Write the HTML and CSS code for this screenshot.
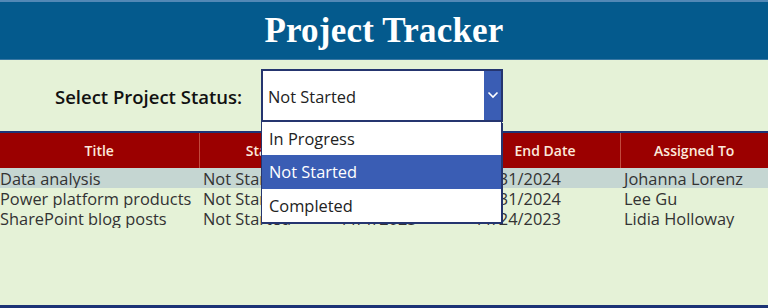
FILE: index.html
```html
<!doctype html>
<html lang="en">
<head>
	<meta charset="utf-8">
	<title>Project Tracker</title>
	<link rel="stylesheet" href="styles.css">
</head>
<body>
<div class="screen">
	<header class="top">
		<h1>Project Tracker</h1>
	</header>

	<div class="filter">
		<label class="filter-label">Select Project Status:</label>
		<div class="select">
			<div class="select-box">
				<span class="select-value">Not Started</span>
				<span class="select-btn">
					<svg width="12" height="8" viewBox="0 0 12 8"><path d="M1.5 1.5 L6 6 L10.5 1.5" fill="none" stroke="#fff" stroke-width="1.6"/></svg>
				</span>
			</div>
			<ul class="select-list">
				<li>In Progress</li>
				<li class="sel">Not Started</li>
				<li>Completed</li>
			</ul>
		</div>
	</div>

	<table class="grid">
		<thead>
			<tr>
				<th class="c-title">Title</th>
				<th class="c-status">Status</th>
				<th class="c-start">Start Date</th>
				<th class="c-end">End Date</th>
				<th class="c-who">Assigned To</th>
			</tr>
		</thead>
		<tbody>
			<tr class="hl">
				<td class="c-title">Data analysis</td>
				<td>Not Started</td>
				<td>1/1/2024</td>
				<td>12/31/2024</td>
				<td>Johanna Lorenz</td>
			</tr>
			<tr>
				<td class="c-title">Power platform products</td>
				<td>Not Started</td>
				<td>1/1/2024</td>
				<td>12/31/2024</td>
				<td>Lee Gu</td>
			</tr>
			<tr>
				<td class="c-title">SharePoint blog posts</td>
				<td>Not Started</td>
				<td>11/1/2023</td>
				<td>11/24/2023</td>
				<td>Lidia Holloway</td>
			</tr>
		</tbody>
	</table>

	<div class="rest"></div>
</div>
</body>
</html>
```

FILE: styles.css
```css
html,body{
	margin:0;
	padding:0;
	background:#e5f2d7;
	font-family:"Open Sans","Noto Sans",sans-serif;
}
*{
	box-sizing:border-box;
}
.screen{
	width:768px;
	height:308px;
	display:flex;
	flex-direction:column;
	border-bottom:3px solid #1c3476;
	overflow:hidden;
}
	.top{
		height:60px;
		background:#045a8d;
		border-top:2px solid #5288b6;
		border-bottom:1px solid #3a78a3;
		display:flex;
		align-items:center;
		justify-content:center;
	}
	.top h1{
		margin:0;
		color:#fff;
		font-family:"Liberation Serif","DejaVu Serif",serif;
		font-weight:700;
		font-size:35px;
		letter-spacing:0.2px;
	}
	.filter{
		height:71px;
		display:flex;
		align-items:center;
		padding-left:55px;
		gap:16px;
		position:relative;
		z-index:2;
	}
	.filter-label{
		width:190px;
		font-weight:600;
		font-size:18.5px;
		color:#111;
		padding-top:2px;
		white-space:nowrap;
	}
	/* the combo box and its open list */
	.select{
		position:relative;
		width:242px;
	}
	.select-box{
		height:53px;
		border:2px solid #25356f;
		background:#fff;
		display:flex;
		align-items:center;
		margin-top:-1px;
	}
	.select-value{
		flex:1;
		padding-left:5px;
		padding-top:2px;
		font-size:16.4px;
		color:#222;
	}
	.select-btn{
		width:17px;
		height:100%;
		background:#3a5db4;
		display:flex;
		align-items:center;
		justify-content:center;
	}
	.select-list{
		position:absolute;
		left:0;
		top:100%;
		width:241px;
		margin:0;
		padding:0;
		list-style:none;
		background:#fff;
		border:1px solid #25356f;
		border-top:none;
		box-shadow:1px 1px 0 #25356f;
	}
	.select-list li{
		height:33.5px;
		padding-left:7px;
		display:flex;
		align-items:center;
		font-size:16.4px;
		color:#222;
	}
	.select-list li.sel{
		background:#3a5db4;
		color:#fff;
	}
	.grid{
		width:768px;
		border-collapse:collapse;
		table-layout:fixed;
		border-top:2px solid #1c3476;
	}
	.grid th{
		height:36px;
		background:#9b0000;
		color:#fbe9dc;
		font-weight:600;
		font-size:14px;
		text-align:center;
		border-left:1px solid #c24a3e;
		padding:0;
	}
	.grid th:first-child{
		border-left:none;
	}
	.c-title{ width:199px; }
	.c-status{ width:136px; }
	.c-start{ width:135px; }
	.c-end{ width:150px; }
	.c-who{ width:148px; }
	.grid td{
		height:20px;
		padding:0 0 0 4px;
		font-size:16.4px;
		line-height:19px;
		color:#333;
		white-space:nowrap;
		overflow:hidden;
	}
	.grid td.c-title{
		padding-left:0;
	}
	.grid tr.hl td{
		background:#c5d6d2;
	}
	.rest{
		flex:1;
	}
```
